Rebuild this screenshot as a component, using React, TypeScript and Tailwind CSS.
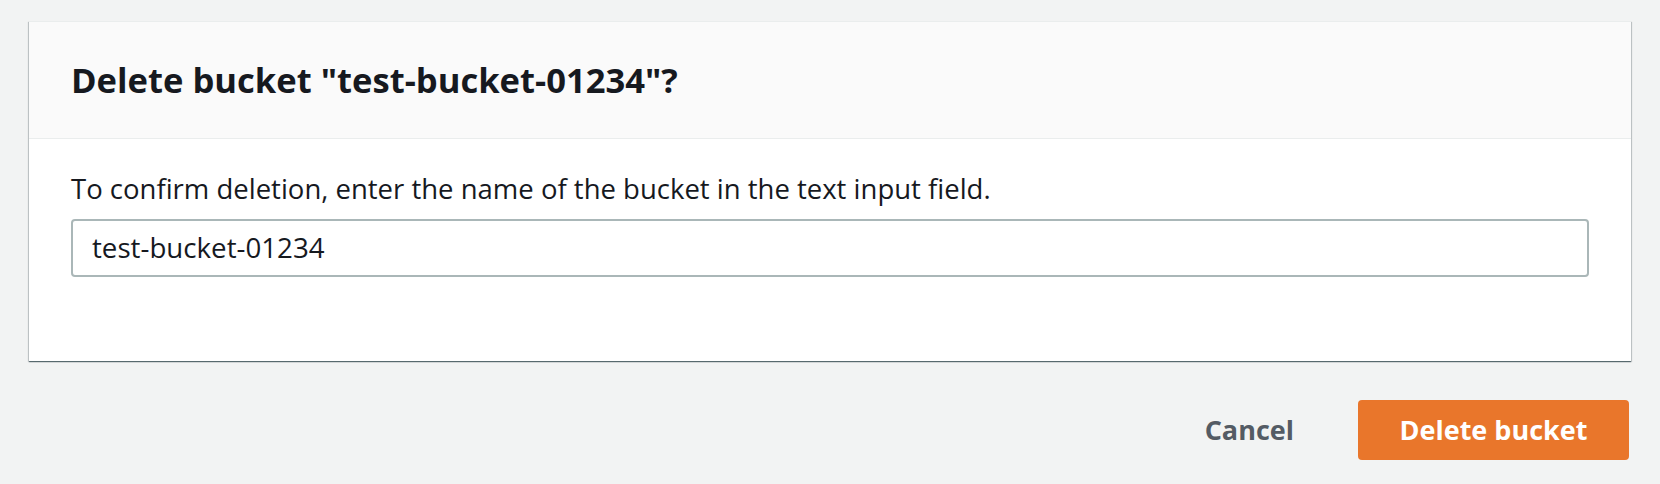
import React from "react";

export default function App() {
  return (
    <div
      className="w-[1660px] h-[484px] bg-[#f2f3f3] pt-[21px] px-[29px] flex flex-col"
      style={{ fontFamily: '"Open Sans", "Liberation Sans", Arial, sans-serif' }}
    >
      <div className="bg-white border-t border-[#eaeded] shadow-[0_1px_1px_0_rgba(0,28,36,0.5),1px_1px_1px_0_rgba(0,28,36,0.15),-1px_1px_1px_0_rgba(0,28,36,0.15)]">
        <div className="h-[117px] bg-[#fafafa] border-b border-[#eaeded] px-[42px] flex items-center">
          <h1 className="text-[34.6px] font-bold text-[#16191f] leading-[44px]">
            Delete bucket "test-bucket-01234"?
          </h1>
        </div>
        <div className="h-[222px] px-[42px] pt-[34px]">
          <p className="text-[27.5px] leading-[32px] text-[#16191f]">
            To confirm deletion, enter the name of the bucket in the text input field.
          </p>
          <div className="mt-[14px] h-[58px] border-2 border-[#aab7b8] rounded-[4px] flex items-center px-[19px]">
            <span className="text-[27.7px] text-[#16191f]">test-bucket-01234</span>
          </div>
        </div>
      </div>
      <div className="flex justify-end items-center mt-[39px] pr-[2px]">
        <button className="text-[27px] font-bold text-[#545b64] px-[20px] h-[60px] mr-[44px]">
          Cancel
        </button>
        <button className="w-[271px] h-[60px] bg-[#e9762b] rounded-[4px] text-[27px] font-bold text-white">
          Delete bucket
        </button>
      </div>
    </div>
  );
}
